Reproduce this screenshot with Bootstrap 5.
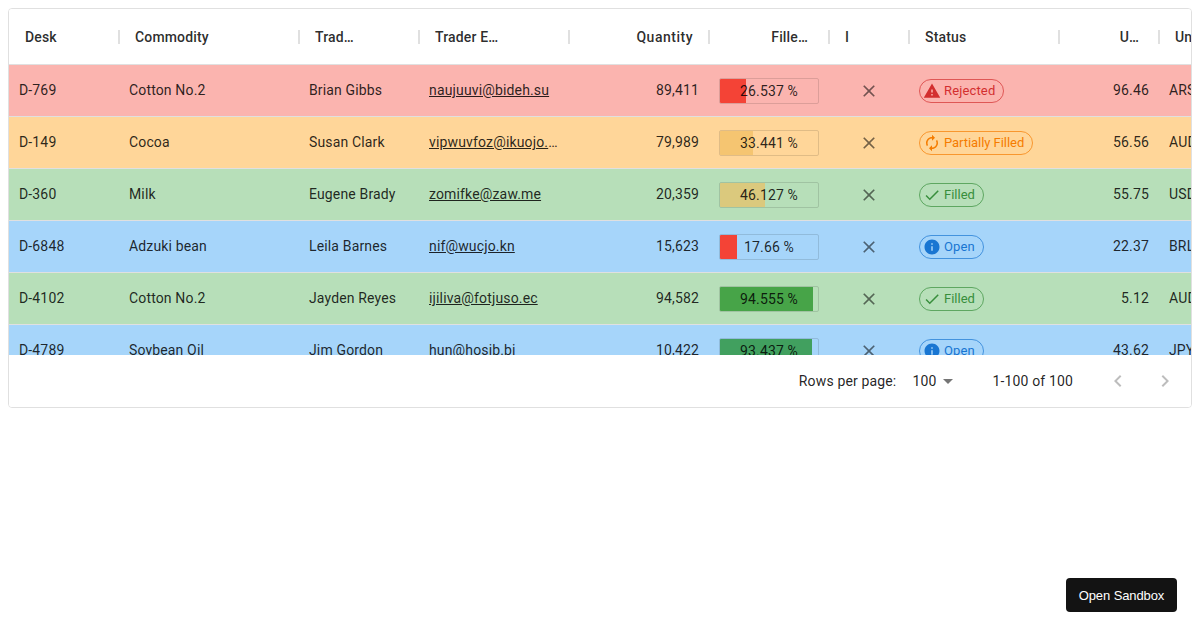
<!DOCTYPE html>
<html lang="en">
<head>
<meta charset="utf-8">
<title>Data grid</title>
<link href="https://cdn.jsdelivr.net/npm/bootstrap@5.3.0/dist/css/bootstrap.min.css" rel="stylesheet">
<style>
body { background:#fff; font-family:Roboto,"Liberation Sans",sans-serif; font-size:14px; letter-spacing:.01071em; color:rgba(0,0,0,.87); -webkit-font-smoothing:antialiased; text-rendering:optimizeSpeed; }
.grid-shell { margin:8px; border:1px solid #e0e0e0; border-radius:4px; overflow:hidden; }
.grid-scroll { height:346px; overflow:hidden; }
.grid-table { table-layout:fixed; width:1300px; border-collapse:separate; border-spacing:0; margin:0; font-size:14px; }
.grid-table th, .grid-table td { padding:0 10px; vertical-align:middle; white-space:nowrap; color:rgba(0,0,0,.84); border-bottom:1px solid #e0e0e0; box-shadow:none; }
.grid-table th { height:56px; padding:2px 16px 0; font-weight:500; background:#fff; position:relative; }
.grid-table th::after { content:""; position:absolute; right:-1px; top:21px; height:14px; width:2px; background:#e0e0e0; z-index:1; }
.grid-table td { height:52px; overflow:hidden; }
.grid-table tr.st-rej td { background:#fbb4af; }
.grid-table tr.st-par td { background:#ffd699; }
.grid-table tr.st-fil td { background:#b7dfb9; }
.grid-table tr.st-ope td { background:#a6d5fa; }
.mail-cell a { color:inherit; text-decoration:underline; }
.fill-box { position:relative; height:26px; width:100%; border:1px solid rgba(0,0,0,.12); border-radius:2px; overflow:hidden; display:flex; align-items:center; justify-content:center; }
.fill-bar { position:absolute; left:0; top:0; bottom:0; }
.fill-bad { background:#f44336; }
.fill-mid { background:#efbb5aa3; }
.fill-good { background:#088208a3; }
.fill-num { position:relative; padding-top:2px; }
.flag-x { width:20px; height:20px; fill:rgba(0,0,0,.54); display:block; margin:1px auto 0; }
.status-pill { display:inline-flex; align-items:center; height:24px; border:1px solid; border-radius:16px; padding:0 8px 0 3px; font-size:13px; line-height:1; margin-top:3px; }
.status-pill svg { width:18px; height:18px; fill:currentColor; margin-right:3px; }
.pill-rej { color:#d32f2f; border-color:rgba(211,47,47,.7); }
.pill-par { color:#f57c00; border-color:rgba(245,124,0,.7); letter-spacing:-.05px; }
.pill-fil { color:#388e3c; border-color:rgba(56,142,60,.7); letter-spacing:0; }
.pill-ope { color:#1976d2; border-color:rgba(25,118,210,.7); }
.grid-foot { height:52px; background:#fff; padding-right:6px; }
.page-size { margin-left:16px; }
.page-size svg { width:24px; height:24px; fill:rgba(0,0,0,.54); }
.page-count { margin-left:32px; margin-right:25px; }
.page-btn { width:40px; height:40px; }
.page-btn svg { width:24px; height:24px; fill:rgba(0,0,0,.26); }
.page-btn + .page-btn { margin-left:7px; }
.sandbox-btn { position:fixed; right:23px; bottom:18px; width:111px; height:34px; background:#131313; color:#fff; border-radius:4px; font:13px "Liberation Sans",Arial,sans-serif; letter-spacing:-.1px; }
.grid-table th.head-fill { padding-right:21px; }
.grid-table th.head-unit { padding-right:20px; }
.grid-table th.head-wide { letter-spacing:.5px; }
</style>
</head>
<body>
<div class="grid-shell">
  <div class="grid-scroll">
    <table class="table grid-table">
      <colgroup>
        <col style="width:110px"><col style="width:180px"><col style="width:120px"><col style="width:150px"><col style="width:140px"><col style="width:120px"><col style="width:80px"><col style="width:150px"><col style="width:100px"><col style="width:150px">
      </colgroup>
      <thead>
        <tr>
          <th>Desk</th><th>Commodity</th><th>Trad…</th><th>Trader E…</th><th class="text-end head-wide">Quantity</th><th class="text-end head-fill">Fille…</th><th>I</th><th>Status</th><th class="text-end head-unit">U…</th><th>Unit</th>
        </tr>
      </thead>
      <tbody>
        <tr class="st-rej">
          <td>D-769</td><td>Cotton No.2</td><td>Brian Gibbs</td>
          <td class="mail-cell text-truncate"><a href="#">naujuuvi@bideh.su</a></td>
          <td class="text-end">89,411</td>
          <td><div class="fill-box"><div class="fill-bar fill-bad" style="width:26.537%"></div><span class="fill-num">26.537 %</span></div></td>
          <td><svg class="flag-x" viewBox="0 0 24 24"><path d="M19 6.41 17.59 5 12 10.59 6.41 5 5 6.41 10.59 12 5 17.59 6.41 19 12 13.41 17.59 19 19 17.59 13.41 12z"/></svg></td>
          <td><span class="status-pill pill-rej"><svg viewBox="0 0 24 24"><path d="M1 21h22L12 2 1 21zm12-3h-2v-2h2v2zm0-4h-2v-4h2v4z"/></svg>Rejected</span></td>
          <td class="text-end">96.46</td><td>ARS</td>
        </tr>
        <tr class="st-par">
          <td>D-149</td><td>Cocoa</td><td>Susan Clark</td>
          <td class="mail-cell text-truncate"><a href="#">vipwuvfoz@ikuojo.gov</a></td>
          <td class="text-end">79,989</td>
          <td><div class="fill-box"><div class="fill-bar fill-mid" style="width:33.441%"></div><span class="fill-num">33.441 %</span></div></td>
          <td><svg class="flag-x" viewBox="0 0 24 24"><path d="M19 6.41 17.59 5 12 10.59 6.41 5 5 6.41 10.59 12 5 17.59 6.41 19 12 13.41 17.59 19 19 17.59 13.41 12z"/></svg></td>
          <td><span class="status-pill pill-par"><svg viewBox="0 0 24 24"><path d="M12 6v3l4-4-4-4v3c-4.42 0-8 3.58-8 8 0 1.57.46 3.03 1.24 4.26L6.7 14.8c-.45-.83-.7-1.79-.7-2.8 0-3.31 2.69-6 6-6zm6.76 1.74L17.3 9.2c.44.84.7 1.79.7 2.8 0 3.31-2.69 6-6 6v-3l-4 4 4 4v-3c4.42 0 8-3.58 8-8 0-1.57-.46-3.03-1.24-4.26z"/></svg>Partially Filled</span></td>
          <td class="text-end">56.56</td><td>AUD</td>
        </tr>
        <tr class="st-fil">
          <td>D-360</td><td>Milk</td><td>Eugene Brady</td>
          <td class="mail-cell text-truncate"><a href="#">zomifke@zaw.me</a></td>
          <td class="text-end">20,359</td>
          <td><div class="fill-box"><div class="fill-bar fill-mid" style="width:46.127%"></div><span class="fill-num">46.127 %</span></div></td>
          <td><svg class="flag-x" viewBox="0 0 24 24"><path d="M19 6.41 17.59 5 12 10.59 6.41 5 5 6.41 10.59 12 5 17.59 6.41 19 12 13.41 17.59 19 19 17.59 13.41 12z"/></svg></td>
          <td><span class="status-pill pill-fil"><svg viewBox="0 0 24 24"><path d="M9 16.2 4.8 12l-1.4 1.4L9 19 21 7l-1.4-1.4L9 16.2z"/></svg>Filled</span></td>
          <td class="text-end">55.75</td><td>USD</td>
        </tr>
        <tr class="st-ope">
          <td>D-6848</td><td>Adzuki bean</td><td>Leila Barnes</td>
          <td class="mail-cell text-truncate"><a href="#">nif@wucjo.kn</a></td>
          <td class="text-end">15,623</td>
          <td><div class="fill-box"><div class="fill-bar fill-bad" style="width:17.66%"></div><span class="fill-num">17.66 %</span></div></td>
          <td><svg class="flag-x" viewBox="0 0 24 24"><path d="M19 6.41 17.59 5 12 10.59 6.41 5 5 6.41 10.59 12 5 17.59 6.41 19 12 13.41 17.59 19 19 17.59 13.41 12z"/></svg></td>
          <td><span class="status-pill pill-ope"><svg viewBox="0 0 24 24"><path d="M12 2C6.48 2 2 6.48 2 12s4.48 10 10 10 10-4.48 10-10S17.52 2 12 2zm1 15h-2v-6h2v6zm0-8h-2V7h2v2z"/></svg>Open</span></td>
          <td class="text-end">22.37</td><td>BRL</td>
        </tr>
        <tr class="st-fil">
          <td>D-4102</td><td>Cotton No.2</td><td>Jayden Reyes</td>
          <td class="mail-cell text-truncate"><a href="#">ijiliva@fotjuso.ec</a></td>
          <td class="text-end">94,582</td>
          <td><div class="fill-box"><div class="fill-bar fill-good" style="width:94.555%"></div><span class="fill-num">94.555 %</span></div></td>
          <td><svg class="flag-x" viewBox="0 0 24 24"><path d="M19 6.41 17.59 5 12 10.59 6.41 5 5 6.41 10.59 12 5 17.59 6.41 19 12 13.41 17.59 19 19 17.59 13.41 12z"/></svg></td>
          <td><span class="status-pill pill-fil"><svg viewBox="0 0 24 24"><path d="M9 16.2 4.8 12l-1.4 1.4L9 19 21 7l-1.4-1.4L9 16.2z"/></svg>Filled</span></td>
          <td class="text-end">5.12</td><td>AUD</td>
        </tr>
        <tr class="st-ope">
          <td>D-4789</td><td>Soybean Oil</td><td>Jim Gordon</td>
          <td class="mail-cell text-truncate"><a href="#">hun@hosib.bi</a></td>
          <td class="text-end">10,422</td>
          <td><div class="fill-box"><div class="fill-bar fill-good" style="width:93.437%"></div><span class="fill-num">93.437 %</span></div></td>
          <td><svg class="flag-x" viewBox="0 0 24 24"><path d="M19 6.41 17.59 5 12 10.59 6.41 5 5 6.41 10.59 12 5 17.59 6.41 19 12 13.41 17.59 19 19 17.59 13.41 12z"/></svg></td>
          <td><span class="status-pill pill-ope"><svg viewBox="0 0 24 24"><path d="M12 2C6.48 2 2 6.48 2 12s4.48 10 10 10 10-4.48 10-10S17.52 2 12 2zm1 15h-2v-6h2v6zm0-8h-2V7h2v2z"/></svg>Open</span></td>
          <td class="text-end">43.62</td><td>JPY</td>
        </tr>
      </tbody>
    </table>
  </div>
  <div class="grid-foot d-flex justify-content-end align-items-center">
    <span>Rows per page:</span>
    <span class="page-size d-inline-flex align-items-center">100<svg viewBox="0 0 24 24"><path d="M7 10l5 5 5-5z"/></svg></span>
    <span class="page-count">1-100 of 100</span>
    <span class="page-btn d-inline-flex align-items-center justify-content-center"><svg viewBox="0 0 24 24"><path d="M15.41 16.59 10.83 12l4.58-4.59L14 6l-6 6 6 6z"/></svg></span>
    <span class="page-btn d-inline-flex align-items-center justify-content-center"><svg viewBox="0 0 24 24"><path d="M8.59 16.59 13.17 12 8.59 7.41 10 6l6 6-6 6z"/></svg></span>
  </div>
</div>
<button type="button" class="btn sandbox-btn p-0 border-0">Open Sandbox</button>
<script src="https://cdn.jsdelivr.net/npm/bootstrap@5.3.0/dist/js/bootstrap.bundle.min.js"></script>
</body>
</html>
